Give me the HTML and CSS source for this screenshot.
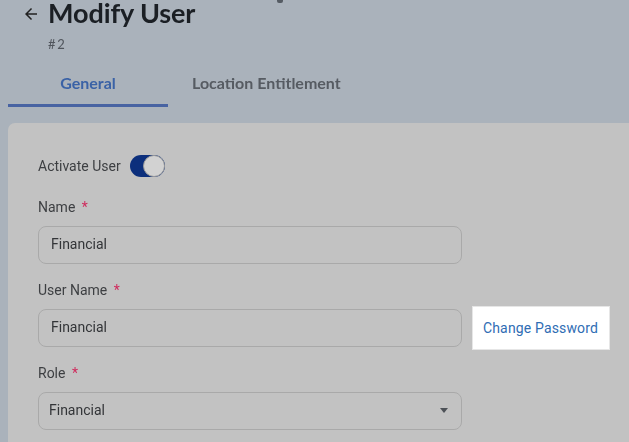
FILE: index.html
```html
<!DOCTYPE html>
<html lang="en">
<head>
<meta charset="utf-8">
<title>Modify User</title>
<link rel="stylesheet" href="styles.css">
</head>
<body>
<div class="page">
  <header class="header">
    <span class="top-mark"></span>
    <div class="title-row">
      <svg class="back" viewBox="0 0 24 24" width="18" height="18" aria-hidden="true"><path d="M20 11H7.83l5.59-5.59L12 4l-8 8 8 8 1.41-1.41L7.83 13H20v-2z" fill="#222"/></svg>
      <h1 class="title">Modify User</h1>
    </div>
    <div class="sub">#&thinsp;2</div>
    <nav class="tabs">
      <div class="tab active">General</div>
      <div class="tab">Location Entitlement</div>
    </nav>
  </header>
  <main class="card">
    <div class="toggle-row">
      <span class="label">Activate User</span>
      <span class="toggle"><span class="knob"></span></span>
    </div>
    <div class="field">
      <div class="label">Name <span class="req">*</span></div>
      <div class="input">Financial</div>
    </div>
    <div class="field">
      <div class="label">User Name <span class="req">*</span></div>
      <div class="row">
        <div class="input">Financial</div>
        <a class="spot-link" href="#">Change Password</a>
      </div>
    </div>
    <div class="field">
      <div class="label">Role <span class="req">*</span></div>
      <div class="input select">Financial<span class="caret"></span></div>
    </div>
  </main>
</div>
</body>
</html>
```
FILE: styles.css
```css
html, body {
  margin: 0;
  padding: 0;
}
body {
  width: 629px;
  height: 442px;
  overflow: hidden;
  background: #aab2bb;
  font-family: Roboto, "Liberation Sans", sans-serif;
}
.page {
  height: 442px;
  display: flex;
  flex-direction: column;
}
.header {
  position: relative;
  filter: blur(0.7px);
}
.top-mark {
  position: absolute;
  left: 277px;
  top: -2px;
  width: 6px;
  height: 5px;
  background: #555b63;
  border-radius: 2px;
}
.title-row {
  display: flex;
  align-items: center;
  padding-left: 22px;
  gap: 8px;
}
.back {
  margin-top: 1px;
}
.title {
  margin: 0;
  font-family: Lato, "Liberation Sans", sans-serif;
  font-weight: 700;
  font-size: 27px;
  line-height: 26px;
  color: #1b1f24;
  letter-spacing: -0.1px;
}
.sub {
  margin: 11px 0 0 48px;
  font-family: Lato, "Liberation Sans", sans-serif;
  font-size: 13px;
  line-height: 14px;
  color: #50555c;
}
.tabs {
  display: flex;
  margin: 9px 0 0 8px;
}
.tab {
  min-width: 160px;
  box-sizing: border-box;
  padding: 14px 24px 12px;
  text-align: center;
  font-family: Lato, "Liberation Sans", sans-serif;
  font-weight: 700;
  font-size: 16px;
  line-height: 18px;
  color: #565b62;
  border-bottom: 3px solid transparent;
}
.tab.active {
  color: #3a62a6;
  border-bottom-color: #4863a2;
}
.card {
  position: relative;
  margin: 16px 0 0 8px;
  flex: 1;
  padding: 32px 0 0 30px;
  border-radius: 7px 0 0 0;
}
.card::before {
  content: "";
  position: absolute;
  inset: 0;
  background: #c2c2c2;
  border-radius: 7px 0 0 0;
  filter: blur(0.7px);
  z-index: -1;
}
.toggle-row {
  display: flex;
  align-items: center;
  gap: 9px;
  height: 22px;
  filter: blur(0.7px);
}
.label {
  font-size: 14px;
  line-height: 16px;
  color: #3d3f42;
}
.req {
  color: #cf2a5c;
  margin-left: 3px;
}
.toggle {
  position: relative;
  display: inline-block;
  width: 35px;
  height: 22px;
  border-radius: 11px;
  background: #0c2f7c;
}
.knob {
  position: absolute;
  right: 0;
  top: 0;
  width: 20px;
  height: 20px;
  border-radius: 50%;
  background: #d2d2d2;
  border: 1px solid #9a9a9a;
}
.field {
  margin-top: 18px;
}
.toggle-row + .field {
  margin-top: 22px;
}
.field > .label {
  filter: blur(0.7px);
  margin-bottom: 11px;
}
.row {
  display: flex;
  align-items: center;
  gap: 10px;
  height: 38px;
}
.input {
  position: relative;
  box-sizing: border-box;
  width: 424px;
  height: 38px;
  flex: none;
  padding: 0 12px;
  border: 1.5px solid #a9a9a9;
  border-radius: 8px;
  background: #c2c2c2;
  font-size: 14px;
  line-height: 35px;
  color: #333538;
  filter: blur(0.7px);
}
.select {
  padding-left: 10px;
}
.caret {
  position: absolute;
  right: 13px;
  top: 15px;
  width: 0;
  height: 0;
  border-left: 4.5px solid transparent;
  border-right: 4.5px solid transparent;
  border-top: 5px solid #4d5157;
}
.spot-link {
  display: block;
  flex: none;
  box-sizing: border-box;
  height: 44px;
  padding: 0 11px 0 10px;
  background: #ffffff;
  border: 1px solid #e6e6e6;
  font-size: 14px;
  line-height: 42px;
  letter-spacing: 0.15px;
  color: #2f6db4;
  text-decoration: none;
  white-space: nowrap;
}
```
